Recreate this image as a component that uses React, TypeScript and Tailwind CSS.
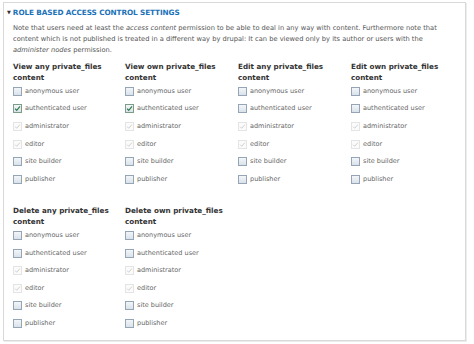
import React from "react";

type State = "off" | "on" | "dis";

const Box = ({ s }: { s: State }) => {
  if (s === "dis") {
    return (
      <span className="inline-flex w-[9px] h-[9px] border border-[#e4e4e4] bg-[#fbfbfb] items-center justify-center shrink-0">
        <svg width="7" height="7" viewBox="0 0 8 8">
          <path d="M1.3 4.2 L3.1 6 L6.8 1.8" fill="none" stroke="#c9c9c9" strokeWidth="1" />
        </svg>
      </span>
    );
  }
  return (
    <span
      className={
        "inline-flex w-[9px] h-[9px] border items-center justify-center shrink-0 bg-gradient-to-b from-[#f3f6f9] to-[#d9e2ea] " +
        (s === "on" ? "border-[#7f9c8a]" : "border-[#95a5b5]")
      }
    >
      {s === "on" && (
        <svg width="7" height="7" viewBox="0 0 8 8">
          <path d="M1.2 4.1 L3.1 6.1 L6.9 1.6" fill="none" stroke="#2f7a45" strokeWidth="1.3" />
        </svg>
      )}
    </span>
  );
};

const roles = ["anonymous user", "authenticated user", "administrator", "editor", "site builder", "publisher"];

const Column = ({ title, states }: { title: string; states: State[] }) => (
  <div className="flex flex-col">
    <div className="text-[7.2px] leading-[11px] font-bold text-[#333] pr-2">
      <div>{title}</div>
      <div>content</div>
    </div>
    {roles.map((r, i) => (
      <div key={r} className="h-[17.6px] flex items-center gap-[3px]">
        <Box s={states[i]} />
        <span className="text-[6.5px] leading-[11px] text-[#666]">{r}</span>
      </div>
    ))}
  </div>
);

export default function App() {
  const authOn: State[] = ["off", "on", "dis", "dis", "off", "off"];
  const authOff: State[] = ["off", "off", "dis", "dis", "off", "off"];
  return (
    <div
      className="w-[474px] h-[344px] bg-white pt-[2px] pl-[3px]"
      style={{ fontFamily: '"DejaVu Sans", Verdana, sans-serif' }}
    >
      <div className="w-[463px] h-[339px] border border-[#d9d9d9] shadow-[1px_1px_0_#ececec] pt-[3.5px] pl-[3px] pr-[4px]">
        <div className="flex items-center h-[11px] gap-[2px]">
          <span className="text-[#333] text-[5px] leading-[11px]">▼</span>
          <span className="text-[7.3px] leading-[11px] font-bold text-[#1c72b8] tracking-[-0.1px]">
            ROLE BASED ACCESS CONTROL SETTINGS
          </span>
        </div>
        <div className="pl-[6px]">
          <div className="mt-[5px] text-[6.7px] leading-[11px] text-[#555] whitespace-nowrap">
            <div>
              Note that users need at least the <em>access content</em> permission to be able to deal in any way with
              content. Furthermore note that
            </div>
            <div>
              content which is not published is treated in a different way by drupal: It can be viewed only by its
              author or users with the
            </div>
            <div>
              <em>administer nodes</em> permission.
            </div>
          </div>
          <div className="mt-[5px] grid grid-cols-[112px_113px_113px_113px]">
            <Column title="View any private_files" states={authOn} />
            <Column title="View own private_files" states={authOn} />
            <Column title="Edit any private_files" states={authOff} />
            <Column title="Edit own private_files" states={authOff} />
          </div>
          <div className="mt-[16.7px] grid grid-cols-[112px_113px_113px_113px]">
            <Column title="Delete any private_files" states={authOff} />
            <Column title="Delete own private_files" states={authOff} />
          </div>
        </div>
      </div>
    </div>
  );
}
